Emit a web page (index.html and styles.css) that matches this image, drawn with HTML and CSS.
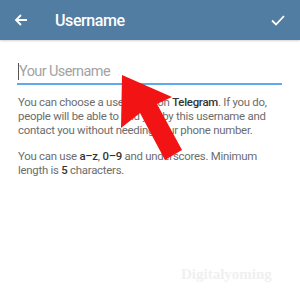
FILE: index.html
```html
<!DOCTYPE html>
<html>
<head>
  <meta charset="UTF-8">
  <title>Username</title>
  <link rel="stylesheet" href="styles.css">
</head>
<body>
  <div class="bar">
    <svg class="back" width="14" height="14" viewBox="0 0 14 14">
      <path d="M13 7H2M7 2L2 7l5 5" fill="none" stroke="#fff" stroke-width="1.8"/>
    </svg>
    <span class="title">Username</span>
    <svg class="done" width="14" height="12" viewBox="0 0 14 12">
      <path d="M1 6.5l4 4L13 2" fill="none" stroke="#fff" stroke-width="1.8"/>
    </svg>
  </div>

  <div class="content">
    <div class="field">
      <span class="caret"></span>
      <span class="placeholder">Your Username</span>
    </div>
    <p class="help">You can choose a username on <b>Telegram</b>. If you do, people will be able to find you by this username and contact you without needing your phone number.</p>
    <p class="help">You can use <b>a&ndash;z</b>, <b>0&ndash;9</b> and underscores. Minimum length is <b>5</b> characters.</p>
  </div>

  <svg class="pointer" width="80" height="100" viewBox="0 0 80 100">
    <polygon points="2,10 1,63 20,48 45,95 62,85 37,39 52,32" fill="#f21414"/>
  </svg>

  <div class="mark">Digitalyoming</div>
</body>
</html>
```

FILE: styles.css
```css
/* page frame */
body {
  margin: 0;
  width: 300px;
  height: 300px;
  background: #fff;
  font-family: Roboto, 'Noto Sans', sans-serif;
  position: relative;
  overflow: hidden;
}
.bar {
  height: 40px;
  background: #527da3;
  display: flex;
  align-items: center;
  padding: 0 15px 0 14px;
  box-shadow: 0 1px 2px rgba(0, 0, 0, 0.18);
}
.back {
  margin-right: 27px;
}
.title {
  flex: 1;
  color: #fff;
  font-size: 16px;
  font-weight: 500;
  letter-spacing: -0.4px;
}
.content {
  padding: 19px 12px 0 18px;
}
.field {
  display: flex;
  align-items: center;
  height: 24px;
  border-bottom: 2px solid #5eaaea;
  width: 265px;
  margin-left: -1px;
}
.caret {
  width: 1px;
  height: 17px;
  background: #555;
  margin-left: 1px;
}
.placeholder {
  color: #a3a3a3;
  font-size: 14.5px;
  letter-spacing: -0.6px;
}
.help {
  margin: 10px 0 0;
  font-size: 11.4px;
  line-height: 14px;
  letter-spacing: -0.25px;
  color: #6d6d6d;
}
.help + .help {
  margin-top: 12px;
}
.help b {
  font-weight: 500;
  color: #333;
}
/* red annotation arrow over the text */
.pointer {
  position: absolute;
  left: 120px;
  top: 65px;
}
.mark {
  position: absolute;
  left: 181px;
  top: 266px;
  font-family: 'Liberation Serif', serif;
  font-weight: bold;
  font-size: 15px;
  color: #f0f0f0;
}
```
